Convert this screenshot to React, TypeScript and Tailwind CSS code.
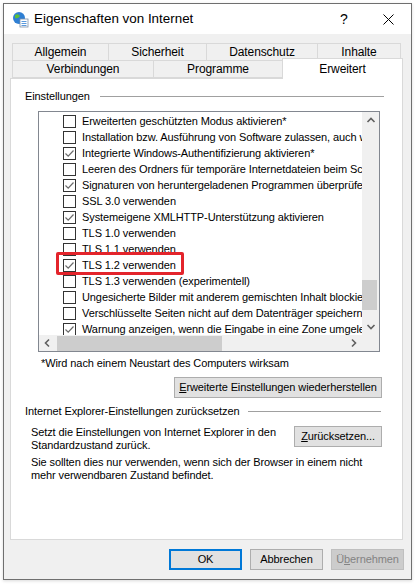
import React from "react";

const rows: { label: string; checked: boolean }[] = [
  { label: "Erweiterten geschützten Modus aktivieren*", checked: false },
  { label: "Installation bzw. Ausführung von Software zulassen, auch wenn die Signatur ungültig ist", checked: false },
  { label: "Integrierte Windows-Authentifizierung aktivieren*", checked: true },
  { label: "Leeren des Ordners für temporäre Internetdateien beim Schließen des Browsers", checked: false },
  { label: "Signaturen von heruntergeladenen Programmen überprüfen", checked: true },
  { label: "SSL 3.0 verwenden", checked: false },
  { label: "Systemeigene XMLHTTP-Unterstützung aktivieren", checked: true },
  { label: "TLS 1.0 verwenden", checked: false },
  { label: "TLS 1.1 verwenden", checked: false },
  { label: "TLS 1.2 verwenden", checked: true },
  { label: "TLS 1.3 verwenden (experimentell)", checked: false },
  { label: "Ungesicherte Bilder mit anderem gemischten Inhalt blockieren", checked: false },
  { label: "Verschlüsselte Seiten nicht auf dem Datenträger speichern", checked: false },
  { label: "Warnung anzeigen, wenn die Eingabe in eine Zone umgeleitet wird", checked: true },
];

function Checkbox({ checked }: { checked: boolean }) {
  return (
    <div className="w-[13px] h-[13px] border border-[#333333] bg-white shrink-0 flex items-center justify-center">
      {checked && (
        <svg width="11" height="11" viewBox="0 0 11 11">
          <path d="M1.5 5.5 L4.2 8.2 L9.5 2.5" fill="none" stroke="#6b6b6b" strokeWidth="1.2" />
        </svg>
      )}
    </div>
  );
}

function Chevron({ dir }: { dir: "up" | "down" | "left" | "right" }) {
  const d = {
    up: "M1.5 6 L5 2.5 L8.5 6",
    down: "M1.5 3 L5 6.5 L8.5 3",
    left: "M6 1.5 L2.5 5 L6 8.5",
    right: "M3 1.5 L6.5 5 L3 8.5",
  }[dir];
  return (
    <svg width="10" height="10" viewBox="0 0 10 10">
      <path d={d} fill="none" stroke="#606060" strokeWidth="1.6" />
    </svg>
  );
}

function Tab({ label, w }: { label: string; w: number }) {
  return (
    <div
      className="h-[18px] border border-[#d9d9d9] -ml-px first:ml-0 bg-[#f0f0f0] flex items-center justify-center text-[12px] text-black"
      style={{ width: w }}
    >
      {label}
    </div>
  );
}

function WinButton({ children, className = "" }: { children: React.ReactNode; className?: string }) {
  return (
    <div
      className={`h-[21px] border border-[#adadad] bg-[#e1e1e1] flex items-center justify-center whitespace-nowrap text-black ${className}`}
    >
      {children}
    </div>
  );
}

export default function App() {
  return (
    <div className="w-[415px] h-[584px] bg-white pt-[3px] pl-[3px] font-['Liberation_Sans','Noto_Sans',sans-serif] text-[11px] tracking-[-0.1px] text-black">
      <div className="w-[409px] h-[577px] border border-[#6f6f6f] bg-[#f0f0f0] flex flex-col shadow-[0_1px_3px_rgba(0,0,0,0.15)]">
        {/* Title bar */}
        <div className="h-[30px] bg-white flex items-center shrink-0 relative tracking-normal">
          <svg className="ml-[8px]" width="17" height="17" viewBox="0 0 17 17">
            <circle cx="7" cy="7" r="6" fill="#2f7fd3" />
            <path d="M3 4 Q6 2 8 5 Q6 8 3 7 Z" fill="#5cbf3a" />
            <path d="M8 9 Q11 8 12 11 L9 12 Z" fill="#5cbf3a" />
            <rect x="8" y="8" width="8" height="8" fill="#ffffff" stroke="#7a8fa8" strokeWidth="0.8" />
            <line x1="9.5" y1="10.5" x2="14.5" y2="10.5" stroke="#2f7fd3" strokeWidth="0.8" />
            <line x1="9.5" y1="12.5" x2="14.5" y2="12.5" stroke="#2f7fd3" strokeWidth="0.8" />
            <line x1="9.5" y1="14.5" x2="14.5" y2="14.5" stroke="#2f7fd3" strokeWidth="0.8" />
          </svg>
          <span className="ml-[5px] text-[13.4px]">Eigenschaften von Internet</span>
          <span className="absolute left-[336px] top-[7px] text-[14px] leading-[16px]">?</span>
          <svg className="absolute left-[379px] top-[10px]" width="11" height="11" viewBox="0 0 11 11">
            <path d="M0.5 0.5 L10.5 10.5 M10.5 0.5 L0.5 10.5" stroke="#000" strokeWidth="1" />
          </svg>
        </div>

        {/* Tabs */}
        <div className="pl-[8px] pt-[9px] text-[11px]">
          <div className="flex">
            <Tab label="Allgemein" w={97} />
            <Tab label="Sicherheit" w={99} />
            <Tab label="Datenschutz" w={112} />
            <Tab label="Inhalte" w={84} />
          </div>
          <div className="flex -mt-px">
            <Tab label="Verbindungen" w={142} />
            <Tab label="Programme" w={130} />
            <div className="w-[121px] h-[21px] -mt-[2px] -ml-px border border-b-0 border-[#d9d9d9] bg-white flex items-center justify-center text-[12px] relative z-10 -mb-px">
              Erweitert
            </div>
          </div>
        </div>

        {/* Panel */}
        <div className="ml-[6px] w-[393px] h-[462px] border border-[#d9d9d9] bg-white shrink-0 pt-[10px] pl-[14px]">
          <div className="flex items-center h-[15px]">
            <span>Einstellungen</span>
            <div className="ml-[10px] flex-1 mr-[18px] h-px bg-[#a0a0a0]" />
          </div>

          {/* List box */}
          <div className="relative ml-[13px] mt-[7px] w-[342px] h-[241px] border border-[#828790] bg-white flex flex-col">
            <div className="flex h-[223px]">
              <div className="w-[323px] overflow-hidden pt-px">
                {rows.map((r) => (
                  <div key={r.label} className="h-[16px] flex items-center pl-[24px] whitespace-nowrap">
                    <Checkbox checked={r.checked} />
                    <span className="ml-[6px]">{r.label}</span>
                  </div>
                ))}
              </div>
              <div className="w-[17px] bg-[#f0f0f0] flex flex-col items-center">
                <div className="h-[17px] flex items-center justify-center">
                  <Chevron dir="up" />
                </div>
                <div className="flex-1 w-full flex flex-col">
                  <div className="h-[151px]" />
                  <div className="h-[30px] w-[15px] bg-[#cdcdcd]" />
                </div>
                <div className="h-[17px] flex items-center justify-center">
                  <Chevron dir="down" />
                </div>
              </div>
            </div>
            <div className="flex h-[17px]">
              <div className="w-[323px] bg-[#f0f0f0] flex items-center">
                <div className="w-[17px] flex justify-center">
                  <Chevron dir="left" />
                </div>
                <div className="ml-[1px] w-[165px] h-[15px] bg-[#cdcdcd]" />
                <div className="flex-1" />
                <div className="w-[17px] flex justify-center">
                  <Chevron dir="right" />
                </div>
              </div>
              <div className="w-[17px] bg-[#f0f0f0]" />
            </div>
            <div className="absolute left-[17px] top-[140px] w-[128px] h-[23px] border-[3px] border-[#e3242b] rounded-[2px]" />
          </div>

          <div className="ml-[16px] mt-[4px] h-[15px] leading-[15px]">*Wird nach einem Neustart des Computers wirksam</div>

          <div className="flex justify-end pr-[20px] mt-[6px]">
            <WinButton className="w-[208px]">
              <span className="underline underline-offset-1">E</span>rweiterte Einstellungen wiederherstellen
            </WinButton>
          </div>

          <div className="flex items-center h-[15px] mt-[6px]">
            <span>Internet Explorer-Einstellungen zurücksetzen</span>
            <div className="ml-[8px] flex-1 mr-[21px] h-px bg-[#a0a0a0]" />
          </div>

          <div className="flex mt-[6px] pl-[6px] pr-[20px]">
            <div className="flex-1 leading-[13px] pt-[1px]">
              Setzt die Einstellungen von Internet Explorer in den
              <br />
              Standardzustand zurück.
            </div>
            <WinButton className="w-[88px] mt-[1px]">
              <span className="underline underline-offset-1">Z</span>urücksetzen...
            </WinButton>
          </div>

          <div className="pl-[6px] mt-[4px] leading-[13px]">
            Sie sollten dies nur verwenden, wenn sich der Browser in einem nicht
            <br />
            mehr verwendbaren Zustand befindet.
          </div>
        </div>

        {/* Bottom buttons */}
        <div className="flex mt-[9px] ml-[165px] gap-[8px]">
          <div className="w-[73px] h-[21px] border-2 border-[#0078d7] bg-[#e1e1e1] flex items-center justify-center">
            OK
          </div>
          <WinButton className="w-[73px]">Abbrechen</WinButton>
          <div className="w-[73px] h-[21px] border border-[#bfbfbf] bg-[#cccccc] flex items-center justify-center text-[#838383]">
            Ü<span className="underline underline-offset-1">b</span>ernehmen
          </div>
        </div>
      </div>
    </div>
  );
}
